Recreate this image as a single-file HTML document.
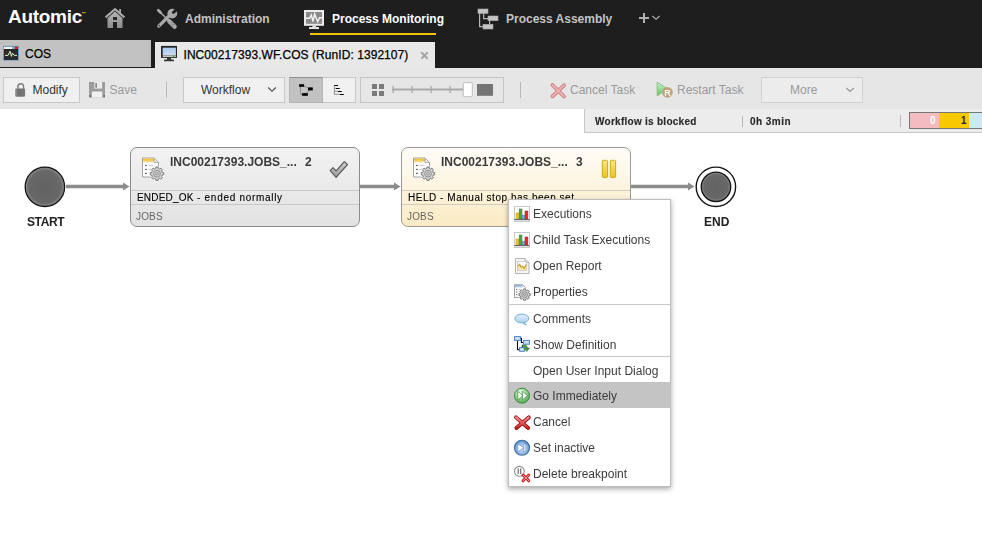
<!DOCTYPE html>
<html><head><meta charset="utf-8">
<style>
*{margin:0;padding:0;box-sizing:border-box}
html,body{width:982px;height:560px;overflow:hidden;background:#fff;font-family:"Liberation Sans",sans-serif}
.a{position:absolute}
.t{position:absolute;line-height:0;white-space:nowrap}
.g{will-change:transform}
svg{position:absolute;overflow:visible}
</style></head><body>
<!-- top nav -->
<div class="a" style="left:0;top:0;width:982px;height:68px;background:#1e1e1e"></div>
<div class="t" style="left:8px;top:6px;font:bold 19px 'Liberation Sans';color:#fff;letter-spacing:-0.3px">Automic</div>
<div class="a" style="left:82px;top:12px;width:3px;height:1px;background:#c9a800"></div>

<div class="t" style="left:185px;top:12px;font:bold 12px 'Liberation Sans';color:#c3c3c3">Administration</div>
<div class="t" style="left:332px;top:12px;font:bold 12px 'Liberation Sans';color:#fff">Process Monitoring</div>
<div class="a" style="left:310px;top:33px;width:126px;height:2px;background:#f2c200"></div>
<div class="t" style="left:506px;top:12px;font:bold 12px 'Liberation Sans';color:#c3c3c3">Process Assembly</div>

<!-- tabs -->
<div class="a" style="left:0;top:40px;width:151px;height:27px;background:#c2c2c2"></div>
<div class="t" style="left:25px;top:47px;font:12px 'Liberation Sans';color:#000;-webkit-text-stroke:0.25px #000">COS</div>
<div class="a" style="left:155px;top:42px;width:280px;height:30px;background:#e8e8e8"></div>
<div class="t" style="left:183.5px;top:48px;font:12px 'Liberation Sans';color:#000;letter-spacing:0.06px;-webkit-text-stroke:0.25px #000">INC00217393.WF.COS (RunID: 1392107)</div>

<!-- toolbar -->
<div class="a" style="left:0;top:68px;width:982px;height:41px;background:#e6e6e6"></div>
<div class="a" style="left:3px;top:77px;width:77px;height:26px;background:#f0f0f0;border:1px solid #c8c8c8"></div>
<div class="t" style="left:32.5px;top:83px;font:12px 'Liberation Sans';color:#333">Modify</div>
<div class="t" style="left:109.5px;top:83px;font:12px 'Liberation Sans';color:#9a9a9a">Save</div>
<div class="a" style="left:166px;top:82px;width:1px;height:16px;background:#b8b8b8"></div>
<div class="a" style="left:183px;top:77px;width:102px;height:26px;background:#f0f0f0;border:1px solid #c8c8c8"></div>
<div class="t" style="left:201px;top:83px;font:12px 'Liberation Sans';color:#333">Workflow</div>
<div class="a" style="left:289px;top:77px;width:67px;height:26px;background:#f0f0f0;border:1px solid #c8c8c8"></div>
<div class="a" style="left:289px;top:77px;width:34px;height:26px;background:#c2c2c2;border:1px solid #b4b4b4;border-top-color:#8e8e8e"></div>
<div class="a" style="left:360px;top:77px;width:144px;height:26px;background:#e6e6e6;border:1px solid #c4c4c4"></div>
<div class="a" style="left:520px;top:82px;width:1px;height:16px;background:#b8b8b8"></div>
<div class="t" style="left:570px;top:83px;font:12px 'Liberation Sans';color:#9a9a9a">Cancel Task</div>
<div class="t" style="left:677px;top:83px;font:12px 'Liberation Sans';color:#9a9a9a">Restart Task</div>
<div class="a" style="left:761px;top:77px;width:102px;height:26px;background:#ececec;border:1px solid #d0d0d0"></div>
<div class="t" style="left:790px;top:83px;font:12px 'Liberation Sans';color:#9a9a9a">More</div>

<!-- info bar -->
<div class="a" style="left:584px;top:109px;width:398px;height:24px;background:#ececec;border-left:1px solid #c8c8c8;border-bottom:1px solid #c8c8c8"></div>
<div class="t g" style="left:594.5px;top:116px;font:bold 10px 'Liberation Sans';color:#2a2a2a;letter-spacing:0.27px;-webkit-text-stroke:0.15px #2a2a2a">Workflow is blocked</div>
<div class="a" style="left:742px;top:116px;width:1px;height:11px;background:#b8b8b8"></div>
<div class="t g" style="left:750px;top:116px;font:bold 10px 'Liberation Sans';color:#2a2a2a;letter-spacing:0.45px;-webkit-text-stroke:0.15px #2a2a2a">0h 3min</div>
<div class="a" style="left:900px;top:115px;width:1px;height:12px;background:#b8b8b8"></div>
<div class="a" style="left:909px;top:112px;width:73px;height:17px;border:1px solid #777;border-right:0;background:#cde9f5"></div>
<div class="a" style="left:910px;top:113px;width:29px;height:15px;background:#f2bcc0"></div>
<div class="a" style="left:939px;top:113px;width:30px;height:15px;background:#f8c800"></div>
<div class="t g" style="left:930px;top:115px;font:bold 10px 'Liberation Sans';color:#fff">0</div>
<div class="t g" style="left:960.5px;top:115px;font:bold 10px 'Liberation Sans';color:#222">1</div>

<!-- workflow -->
<svg style="left:0;top:0" width="982" height="560"><g stroke="#8c8c8c" stroke-width="3.5"><line x1="66" y1="186.4" x2="124" y2="186.4"/><line x1="360" y1="186.4" x2="395" y2="186.4"/><line x1="631" y1="186.4" x2="689" y2="186.4"/></g></svg>

<svg style="left:0;top:150px" width="760" height="70" viewBox="0 150 760 70">
<defs><radialGradient id="gBall2" cx="0.5" cy="0.5" r="0.5"><stop offset="0" stop-color="#626262"/><stop offset="0.82" stop-color="#686868"/><stop offset="0.95" stop-color="#858585"/><stop offset="1" stop-color="#8a8a8a"/></radialGradient></defs>
<circle cx="44.9" cy="186.8" r="19.7" fill="url(#gBall2)" stroke="#141414" stroke-width="1.3"/>
<circle cx="715.9" cy="186.8" r="19.7" fill="#fff" stroke="#141414" stroke-width="1.4"/>
<circle cx="716" cy="186.8" r="14.7" fill="url(#gBall2)" stroke="#141414" stroke-width="1.4"/>
</svg>
<div class="t g" style="left:26.5px;top:215px;font:bold 12px 'Liberation Sans';color:#222;letter-spacing:-0.4px">START</div>


<div class="t g" style="left:704px;top:215px;font:bold 12px 'Liberation Sans';color:#222">END</div>

<!-- node 1 -->
<div class="a" style="left:130px;top:147px;width:230px;height:80px;border:1px solid #8c8c8c;border-radius:7px;background:linear-gradient(#f2f2f2,#e2e2e2)"></div>
<div class="a" style="left:131px;top:190px;width:228px;height:1px;background:#c8c8c8"></div>
<div class="a" style="left:131px;top:204px;width:228px;height:1px;background:#c8c8c8"></div>
<div class="t g" style="left:170px;top:155px;font:bold 12px 'Liberation Sans';color:#3a3a3a">INC00217393.JOBS_...</div>
<div class="t g" style="left:305px;top:155px;font:bold 12px 'Liberation Sans';color:#3a3a3a">2</div>
<div class="t g" style="left:136.5px;top:192.1px;font:10px 'Liberation Sans';color:#000;-webkit-text-stroke:0.12px #000"><span style="letter-spacing:0.2px">ENDED_OK</span><span style="letter-spacing:0.7px"> - ended normally</span></div>
<div class="t g" style="left:136px;top:210.7px;font:10px 'Liberation Sans';color:#666;letter-spacing:0.15px">JOBS</div>

<!-- node 2 -->
<div class="a" style="left:401px;top:147px;width:230px;height:80px;border:1px solid #999;border-radius:7px;background:linear-gradient(#fefcf7 0%,#fdf6e4 40%,#fbebc4 100%)"></div>
<div class="a" style="left:402px;top:190px;width:228px;height:1px;background:#d4ccb8"></div>
<div class="a" style="left:402px;top:204px;width:228px;height:1px;background:#d4ccb8"></div>
<div class="t g" style="left:441px;top:155px;font:bold 12px 'Liberation Sans';color:#3a3a3a">INC00217393.JOBS_...</div>
<div class="t g" style="left:576px;top:155px;font:bold 12px 'Liberation Sans';color:#3a3a3a">3</div>
<div class="t g" style="left:407.5px;top:192.1px;font:10px 'Liberation Sans';color:#000;letter-spacing:0.53px;-webkit-text-stroke:0.12px #000">HELD - Manual stop has been set</div>
<div class="t g" style="left:407px;top:210.7px;font:10px 'Liberation Sans';color:#666;letter-spacing:0.15px">JOBS</div>


<svg style="left:0;top:0" width="982" height="560" viewBox="0 0 982 560">
<defs>
<linearGradient id="gHome" x1="0" y1="0" x2="0" y2="1"><stop offset="0" stop-color="#b4b4b4"/><stop offset="1" stop-color="#8c8c8c"/></linearGradient>
<radialGradient id="gBall" cx="0.5" cy="0.5" r="0.5"><stop offset="0" stop-color="#5e5e5e"/><stop offset="0.8" stop-color="#686868"/><stop offset="1" stop-color="#8a8a8a"/></radialGradient>
<linearGradient id="gChk" x1="0" y1="0" x2="0" y2="1"><stop offset="0" stop-color="#cfcfcf"/><stop offset="1" stop-color="#9a9a9a"/></linearGradient>
<linearGradient id="gPause" x1="0" y1="0" x2="0" y2="1"><stop offset="0" stop-color="#fbe774"/><stop offset="1" stop-color="#e9c21c"/></linearGradient>
<linearGradient id="gLock" x1="0" y1="0" x2="1" y2="0"><stop offset="0" stop-color="#9a9a9a"/><stop offset="0.3" stop-color="#6e6e6e"/><stop offset="1" stop-color="#7a7a7a"/></linearGradient>
<linearGradient id="gGreen" x1="0" y1="0" x2="0" y2="1"><stop offset="0" stop-color="#c8f2c8"/><stop offset="0.5" stop-color="#98dc98"/><stop offset="1" stop-color="#68c068"/></linearGradient>
<linearGradient id="gScreen" x1="0" y1="0" x2="0" y2="1"><stop offset="0" stop-color="#a8c8ec"/><stop offset="1" stop-color="#c8dcf0"/></linearGradient>
<g id="docgear">
 <path d="M0.5,0.5 H12 L16.5,5 V19.5 H0.5 Z" fill="#fcfcfc" stroke="#a4a4a4" stroke-width="1"/>
 <rect x="1" y="1" width="11" height="3.6" fill="#f2c444"/>
 <rect x="1" y="3.2" width="11" height="1.4" fill="#f6dc8c"/>
 <path d="M12,0.5 V5 H16.5 Z" fill="#e4ecf4" stroke="#a4a4a4" stroke-width="0.8"/>
 <rect x="3" y="7.4" width="1.8" height="1" fill="#444"/><rect x="6.5" y="7.4" width="5" height="0.9" fill="#c4c4c4"/>
 <rect x="3" y="11.4" width="1.8" height="1" fill="#444"/><rect x="6.5" y="11.4" width="3" height="0.9" fill="#c4c4c4"/>
 <rect x="3" y="15.4" width="1.8" height="1" fill="#444"/>
 <g transform="translate(15,16.2)">
  <circle r="7.6" fill="#fff" opacity="0.6"/>
  <path d="M5.25,-1.28 L6.69,-1.20 L6.69,1.20 L5.25,1.28 L4.62,2.80 L5.58,3.89 L3.89,5.58 L2.80,4.62 L1.28,5.25 L1.20,6.69 L-1.20,6.69 L-1.28,5.25 L-2.80,4.62 L-3.89,5.58 L-5.58,3.89 L-4.62,2.80 L-5.25,1.28 L-6.69,1.20 L-6.69,-1.20 L-5.25,-1.28 L-4.62,-2.80 L-5.58,-3.89 L-3.89,-5.58 L-2.80,-4.62 L-1.28,-5.25 L-1.20,-6.69 L1.20,-6.69 L1.28,-5.25 L2.80,-4.62 L3.89,-5.58 L5.58,-3.89 L4.62,-2.80 Z" fill="#d4d4d4" stroke="#707070" stroke-width="0.9" stroke-linejoin="round"/>
  <circle r="3.4" fill="#cfcfcf" stroke="#8a8a8a" stroke-width="0.9"/>
  <circle r="1.6" fill="#b8b8b8" stroke="#999" stroke-width="0.6"/>
 </g>
</g>
</defs>
<!-- logo TM -->
<rect x="82" y="12" width="3.5" height="1.2" fill="#b89a20"/>
<!-- home -->
<path d="M107.5,28 V18.3 L115,11.6 L122.5,18.3 V28 H117 V22 H113 V28 Z" fill="url(#gHome)"/>
<rect x="113.1" y="17.1" width="3.9" height="2.8" fill="#1e1e1e"/>
<path d="M105.6,17.4 L115,9.2 L124.4,17.4" fill="none" stroke="#a8a8a8" stroke-width="2.1" stroke-linejoin="miter"/>
<rect x="119.2" y="9" width="1.8" height="4" fill="#a8a8a8"/>
<!-- tools -->
<g stroke="#a9a9a9" stroke-linecap="round" fill="none">
 <line x1="159.5" y1="11.5" x2="167.5" y2="19.5" stroke-width="1.5"/>
 <line x1="158.3" y1="10.3" x2="160.6" y2="12.6" stroke-width="2.8"/>
 <line x1="169.2" y1="21.2" x2="174.6" y2="26.6" stroke-width="4.4"/>
 <line x1="158.8" y1="26.2" x2="169.5" y2="15.5" stroke-width="3.2"/>
</g>
<circle cx="172.3" cy="13.6" r="4.9" fill="#a9a9a9"/>
<line x1="173.4" y1="12.5" x2="178.5" y2="7.4" stroke="#1e1e1e" stroke-width="2.8" stroke-linecap="round"/>
<circle cx="159.2" cy="25.8" r="0.7" fill="#1e1e1e"/>
<g fill="#6e6e6e"><rect x="170.8" y="22.6" width="0.9" height="0.9"/><rect x="172.4" y="24.2" width="0.9" height="0.9"/><rect x="172.4" y="22.2" width="0.9" height="0.9"/><rect x="170.6" y="24.4" width="0.9" height="0.9"/><rect x="174" y="23.8" width="0.9" height="0.9"/><rect x="172.2" y="26" width="0.9" height="0.9"/></g>
<!-- monitor (process monitoring) -->
<rect x="305" y="11" width="18" height="13.8" fill="#8a8a8a" stroke="#ececec" stroke-width="2"/>
<polyline points="306,18.2 309.6,18.2 311.3,15 313,21.6 314.6,14 317.7,21.8 319.5,17.8 322,17.8" fill="none" stroke="#f4f4f4" stroke-width="1.4" stroke-linejoin="miter"/>
<rect x="312.3" y="25.7" width="3.8" height="1.8" fill="#e0e0e0"/>
<rect x="309" y="27.1" width="10" height="1.9" fill="#ececec"/>
<!-- process assembly -->
<g stroke="#b8b8b8" fill="none" stroke-width="1.2">
 <polyline points="479.6,13.5 479.6,26.6 483,26.6"/>
 <polyline points="483.6,13.5 483.6,18.6 488,18.6"/>
 <line x1="489.6" y1="20.7" x2="489.6" y2="24.3"/>
</g>
<rect x="478" y="9" width="10" height="4.5" fill="#c4c4c4" stroke="#a8a8a8" stroke-width="0.6"/>
<rect x="488" y="16" width="10" height="4.7" fill="#c4c4c4" stroke="#a8a8a8" stroke-width="0.6"/>
<rect x="483" y="24.3" width="10" height="4.7" fill="#c4c4c4" stroke="#a8a8a8" stroke-width="0.6"/>
<!-- plus chevron -->
<rect x="639" y="17" width="10" height="2" fill="#b0b0b0"/>
<rect x="643" y="13" width="2" height="10" fill="#b0b0b0"/>
<polyline points="652.4,16 656,19.2 659.6,16" fill="none" stroke="#a8a8a8" stroke-width="1.3"/>
<!-- COS tab icon -->
<rect x="3.5" y="46.3" width="15" height="13.8" fill="#111" stroke="#6f9fd0" stroke-width="0.9"/>
<rect x="4" y="46.8" width="8" height="2.2" fill="#eef4fb"/>
<rect x="12" y="46.8" width="2.8" height="2.2" fill="#8ab0d8"/>
<rect x="15" y="46.8" width="3" height="2.2" fill="#e02020"/>
<rect x="4" y="49.2" width="14" height="10.5" fill="#2a2a2a"/>
<polyline points="5,55.4 8,55.4 10,51.2 11.4,56.4 12.4,53 14.2,55.4 17,55.4" fill="none" stroke="#d8f4c0" stroke-width="1"/>
<!-- active tab monitor -->
<rect x="161" y="45.9" width="16" height="12" fill="#262626"/>
<rect x="162.7" y="47.7" width="13.2" height="7.5" fill="url(#gScreen)"/>
<rect x="162.7" y="55.4" width="13.2" height="1.5" fill="#d8d8d8"/>
<rect x="172.8" y="55.4" width="1.6" height="1.5" fill="#30b030"/>
<rect x="167" y="57.9" width="4" height="2" fill="#333"/>
<rect x="164" y="59.5" width="10" height="1.8" rx="0.9" fill="#333"/>
<!-- close x -->
<path d="M421.3,52.3 L427.7,58.7 M427.7,52.3 L421.3,58.7" stroke="#a6a6a6" stroke-width="2"/>
<!-- lock -->
<path d="M17.9,89 V86.6 A2.85,2.85 0 0 1 23.6,86.6 V89" fill="none" stroke="#7c7c7c" stroke-width="1.4"/>
<rect x="15.1" y="88.4" width="10" height="8.3" rx="1.2" fill="url(#gLock)"/>
<!-- save -->
<path d="M89,82 H105 V97.6 H89 Z" fill="#9c9c9c"/>
<rect x="94.3" y="82" width="7.8" height="6.6" fill="#ececec"/>
<rect x="95.3" y="83" width="1.7" height="4.8" fill="#8a8a8a"/>
<rect x="91.9" y="91.5" width="10.4" height="6.1" fill="#f0f0f0"/>
<rect x="89" y="95" width="1.8" height="2" fill="#707070"/><rect x="103.2" y="95" width="1.8" height="2" fill="#707070"/>
<!-- workflow chevron -->
<polyline points="268.2,87.5 272,91.2 275.8,87.5" fill="none" stroke="#555" stroke-width="1.2"/>
<!-- tree toggle icon -->
<g stroke="#8a8a8a" stroke-width="0.9" fill="none"><polyline points="300.5,86 300.5,94.5 303,94.5"/><line x1="304" y1="86" x2="309" y2="88.5"/><line x1="310" y1="90" x2="306" y2="93.5"/></g>
<rect x="299.1" y="84.2" width="5" height="2.6" fill="#000"/>
<rect x="308" y="87.4" width="4.8" height="3" fill="#000"/>
<rect x="302.1" y="93.1" width="5.7" height="2.7" fill="#000"/>
<!-- list toggle icon -->
<g stroke="#888" stroke-width="0.9" fill="none"><polyline points="334.4,86.5 334.4,94.5"/><line x1="334.4" y1="88.4" x2="336" y2="88.4"/><line x1="334.4" y1="91.4" x2="338" y2="91.4"/><line x1="334.4" y1="94.3" x2="340" y2="94.3"/></g>
<rect x="334" y="85" width="4" height="1" fill="#000"/>
<rect x="336" y="88" width="3.7" height="1" fill="#000"/>
<rect x="338" y="91" width="3.7" height="1" fill="#000"/>
<rect x="340" y="94" width="3.8" height="1" fill="#000"/>
<!-- slider -->
<g fill="#7a7a7a"><rect x="372" y="84" width="5" height="5"/><rect x="379" y="84" width="5" height="5"/><rect x="372" y="91" width="5" height="5"/><rect x="379" y="91" width="5" height="5"/></g>
<rect x="392" y="88.5" width="71" height="2" fill="#aaa"/>
<g fill="#aaa"><rect x="392.5" y="86" width="1.3" height="7"/><rect x="411.5" y="86" width="1.3" height="7"/><rect x="430.5" y="86" width="1.3" height="7"/><rect x="449.5" y="86" width="1.3" height="7"/></g>
<rect x="463.3" y="82.7" width="9" height="14" rx="1" fill="#fff" stroke="#b0b0b0" stroke-width="0.8"/>
<rect x="477" y="84" width="16" height="11.8" fill="#757575"/>
<!-- cancel task x -->
<path d="M552.5,85 L564,96.5 M564,85.3 L552.5,96.3" stroke="#c47a7a" stroke-width="3.8" stroke-linecap="round"/>
<path d="M552.5,85 L564,96.5 M564,85.3 L552.5,96.3" stroke="#eeb0b0" stroke-width="2.2" stroke-linecap="round"/>
<!-- restart -->
<path d="M657.2,82.3 L667.5,88.8 L657.2,95.8 Z" fill="url(#gGreen)" stroke="#6cb06c" stroke-width="0.7"/>
<circle cx="667.4" cy="92.3" r="5.4" fill="#c4a27e"/>
<text x="667.5" y="95.6" font-family="Liberation Sans" font-weight="bold" font-size="9" fill="#fff" text-anchor="middle">R</text>
<!-- more chevron -->
<polyline points="846.2,88 850,91.5 853.8,88" fill="none" stroke="#9a9a9a" stroke-width="1.2"/>
<!-- arrowheads -->
<path d="M123,182.5 L129.5,186.5 L123,190.5 Z" fill="#8c8c8c"/>
<path d="M394,182.5 L400.5,186.5 L394,190.5 Z" fill="#8c8c8c"/>
<path d="M688,182.5 L694.5,186.5 L688,190.5 Z" fill="#8c8c8c"/>
<!-- node icons -->
<use href="#docgear" x="142" y="157.5"/>
<use href="#docgear" x="413" y="157.5"/>
<!-- check -->
<path d="M330.2,170.6 L333,167.6 L336.1,170.9 L344.3,161.6 L347.5,164.5 L336.1,177.3 Z" fill="url(#gChk)" stroke="#5a5a5a" stroke-width="1.15" stroke-linejoin="round"/>
<!-- pause -->
<rect x="602.3" y="160.3" width="5.3" height="17.3" rx="1.2" fill="url(#gPause)" stroke="#c9a20a" stroke-width="0.9"/>
<rect x="610.3" y="160.3" width="5.3" height="17.3" rx="1.2" fill="url(#gPause)" stroke="#c9a20a" stroke-width="0.9"/>
</svg>
<!-- context menu -->
<div class="a" style="left:508px;top:199px;width:163px;height:288px;background:#fff;border:1px solid #bdbdbd;box-shadow:0 2px 5px rgba(0,0,0,0.35)"></div>
<div class="a" style="left:509px;top:304px;width:161px;height:1px;background:#c8c8c8"></div>
<div class="a" style="left:509px;top:356px;width:161px;height:1px;background:#c8c8c8"></div>
<div class="a" style="left:509px;top:382px;width:161px;height:26px;background:#c4c4c4"></div>
<div class="t g" style="left:532.5px;top:207px;font:12px 'Liberation Sans';color:#3c3c3c">Executions</div>
<div class="t g" style="left:532.5px;top:233px;font:12px 'Liberation Sans';color:#3c3c3c">Child Task Executions</div>
<div class="t g" style="left:532.5px;top:259px;font:12px 'Liberation Sans';color:#3c3c3c">Open Report</div>
<div class="t g" style="left:532.5px;top:285px;font:12px 'Liberation Sans';color:#3c3c3c">Properties</div>
<div class="t g" style="left:532.5px;top:312px;font:12px 'Liberation Sans';color:#3c3c3c">Comments</div>
<div class="t g" style="left:532.5px;top:338px;font:12px 'Liberation Sans';color:#3c3c3c">Show Definition</div>
<div class="t g" style="left:532.5px;top:364px;font:12px 'Liberation Sans';color:#3c3c3c">Open User Input Dialog</div>
<div class="t g" style="left:532.5px;top:389px;font:12px 'Liberation Sans';color:#3c3c3c">Go Immediately</div>
<div class="t g" style="left:532.5px;top:415px;font:12px 'Liberation Sans';color:#3c3c3c">Cancel</div>
<div class="t g" style="left:532.5px;top:441px;font:12px 'Liberation Sans';color:#3c3c3c">Set inactive</div>
<div class="t g" style="left:532.5px;top:467px;font:12px 'Liberation Sans';color:#3c3c3c">Delete breakpoint</div>

<svg style="left:0;top:0" width="982" height="560" viewBox="0 0 982 560">
<defs>
<radialGradient id="gGo2" cx="0.4" cy="0.3" r="0.75"><stop offset="0" stop-color="#effbef"/><stop offset="0.45" stop-color="#9ad69a"/><stop offset="1" stop-color="#4ea64e"/></radialGradient>
<linearGradient id="gGo" x1="0" y1="0" x2="0" y2="1"><stop offset="0" stop-color="#8fd08f"/><stop offset="1" stop-color="#3c9a3c"/></linearGradient>
<radialGradient id="gBlue2" cx="0.5" cy="0.55" r="0.55"><stop offset="0" stop-color="#c4daf2"/><stop offset="0.6" stop-color="#9cbfe6"/><stop offset="1" stop-color="#5288c4"/></radialGradient>
<linearGradient id="gBlue" x1="0" y1="0" x2="0" y2="1"><stop offset="0" stop-color="#7aaee0"/><stop offset="1" stop-color="#4a82c0"/></linearGradient>
<linearGradient id="gPropHdr" x1="0" y1="0" x2="0" y2="1"><stop offset="0" stop-color="#7aa8dc"/><stop offset="1" stop-color="#c4dcf4"/></linearGradient>
<linearGradient id="gBub" x1="0" y1="0" x2="0" y2="1"><stop offset="0" stop-color="#e4f2fb"/><stop offset="1" stop-color="#a8d0ec"/></linearGradient>
<g id="bars">
 <rect x="0.5" y="0.5" width="15" height="15" fill="#fff" stroke="#c8c8c8" stroke-width="1"/>
 <rect x="2" y="7" width="3" height="6" fill="#f0c030" stroke="#c89a10" stroke-width="0.5"/>
 <rect x="5.2" y="3" width="2.8" height="10" fill="#50a050" stroke="#307830" stroke-width="0.5"/>
 <rect x="8.3" y="9.2" width="2.6" height="3.8" fill="#78acdc" stroke="#4a80b8" stroke-width="0.5"/>
 <rect x="11" y="5" width="2.9" height="8" fill="#e03030" stroke="#a81818" stroke-width="0.5"/>
 <rect x="0.5" y="13" width="15" height="1.2" fill="#666"/>
</g>
</defs>
<use href="#bars" x="514" y="206"/>
<use href="#bars" x="514" y="232"/>
<!-- open report -->
<path d="M515.5,258.5 H525 L529,262.5 V273.5 H515.5 Z" fill="#f6f6f6" stroke="#b4b4b4" stroke-width="1"/>
<path d="M525,258.5 V262.5 H529" fill="#e0e0e0" stroke="#a8a8a8" stroke-width="0.8"/>
<rect x="517.6" y="261.4" width="9" height="9.2" fill="#fdfdfd" stroke="#c4c4c4" stroke-width="0.8"/>
<path d="M518,270.3 V266.5 L519.6,264.2 L521.1,267 L522.4,266.2 L524.1,268.4 L526.3,264.2 V270.3 Z" fill="#f8e4a8"/>
<polyline points="518,266.5 519.6,264.2 521.1,267 522.4,266.2 524.1,268.4 526.3,264.2" fill="none" stroke="#c49a1c" stroke-width="1.1"/>
<!-- properties -->
<path d="M514.5,284.7 H522.5 L525.5,287.7 V297.5 H514.5 Z" fill="#f8f8f8" stroke="#a0a0a0" stroke-width="1"/>
<rect x="515" y="285.2" width="7.5" height="2.2" fill="url(#gPropHdr)"/>
<g fill="#777"><rect x="516" y="289" width="1.2" height="1"/><rect x="516" y="291.5" width="1.2" height="1"/><rect x="516" y="294" width="1.2" height="1"/></g>
<g fill="#ccc"><rect x="518.5" y="289" width="3" height="1"/><rect x="518.5" y="291.5" width="2" height="1"/></g>
<g transform="translate(524.6,294.6) scale(0.85)">
 <circle r="7.8" fill="#fff" opacity="0.7"/>
 <path d="M5.25,-1.28 L6.69,-1.20 L6.69,1.20 L5.25,1.28 L4.62,2.80 L5.58,3.89 L3.89,5.58 L2.80,4.62 L1.28,5.25 L1.20,6.69 L-1.20,6.69 L-1.28,5.25 L-2.80,4.62 L-3.89,5.58 L-5.58,3.89 L-4.62,2.80 L-5.25,1.28 L-6.69,1.20 L-6.69,-1.20 L-5.25,-1.28 L-4.62,-2.80 L-5.58,-3.89 L-3.89,-5.58 L-2.80,-4.62 L-1.28,-5.25 L-1.20,-6.69 L1.20,-6.69 L1.28,-5.25 L2.80,-4.62 L3.89,-5.58 L5.58,-3.89 L4.62,-2.80 Z" fill="#d4d4d4" stroke="#6a6a6a" stroke-width="1" stroke-linejoin="round"/>
 <circle r="3.4" fill="#cfcfcf" stroke="#808080" stroke-width="1"/>
 <circle r="1.6" fill="#b0b0b0" stroke="#909090" stroke-width="0.6"/>
</g>
<!-- comments -->
<path d="M524,322.5 L526.5,325 L523.2,323.6 Z" fill="#9ecbea" stroke="#6aa8d4" stroke-width="0.8"/>
<ellipse cx="521.8" cy="318.5" rx="7" ry="4.4" fill="url(#gBub)" stroke="#74acd6" stroke-width="1"/>
<!-- show definition -->
<g stroke="#111" stroke-width="1.1" fill="none"><polyline points="517.5,340.8 517.5,349.6 519.5,349.6"/><polyline points="520.7,338.4 521.4,338.4 521.4,342.5 523.3,342.5"/><line x1="522.4" y1="344.8" x2="522.4" y2="347.2"/></g>
<rect x="514.6" y="336.6" width="5.8" height="3.8" fill="#cfe2f6" stroke="#4a82c4" stroke-width="1"/>
<rect x="523.6" y="340.4" width="5.8" height="3.8" fill="#cfe2f6" stroke="#4a82c4" stroke-width="1"/>
<rect x="519.6" y="347.5" width="4.8" height="3.8" fill="#cfe2f6" stroke="#4a82c4" stroke-width="1"/>
<path d="M522.6,345.4 Q526.5,343.6 527.6,348 L529.6,348 L526.8,351.6 L523.9,348 L525.8,348 Q525.2,346 522.6,346.8 Z" fill="#3f9a3f" stroke="#236d23" stroke-width="0.5"/>
<!-- go immediately -->
<circle cx="522" cy="395.7" r="7.5" fill="url(#gGo2)" stroke="#3a8a3a" stroke-width="1"/>
<path d="M517.9,391.3 L523.1,395.6 L517.9,399.9 Z M522.3,391.3 L527.5,395.6 L522.3,399.9 Z" fill="#fff" stroke="#3c8c3c" stroke-width="0.7" stroke-linejoin="round"/>
<!-- cancel x red -->
<linearGradient id="gRedX" gradientUnits="userSpaceOnUse" x1="0" y1="416" x2="0" y2="429"><stop offset="0" stop-color="#f6a0a0"/><stop offset="0.5" stop-color="#e45a5a"/><stop offset="1" stop-color="#c82020"/></linearGradient>
<path d="M516,417.4 L528.2,428 M528.8,417.4 L516.4,428" stroke="#9a1010" stroke-width="3.9" stroke-linecap="round"/>
<path d="M528.6,417.5 L516.5,427.9" stroke="#9a1010" stroke-width="3.2" stroke-linecap="round"/>
<path d="M516,417.4 L528.2,428 M528.6,417.5 L516.5,427.9" stroke="url(#gRedX)" stroke-width="2.2" stroke-linecap="round"/>
<!-- set inactive -->
<circle cx="522" cy="447.8" r="7.5" fill="url(#gBlue2)" stroke="#3a6eaa" stroke-width="1.1"/>
<path d="M517.9,443.9 L523.8,447.8 L517.9,451.7 Z" fill="#fff" stroke="#4a7cb8" stroke-width="0.5"/>
<rect x="524" y="444" width="1.9" height="7.7" fill="#fff" stroke="#4a7cb8" stroke-width="0.5"/>
<!-- delete breakpoint -->
<circle cx="519.4" cy="471.3" r="4.9" fill="#fff" stroke="#8c8c8c" stroke-width="1.1"/>
<rect x="517.6" y="468.4" width="1.3" height="5.6" fill="#7a7a7a"/><rect x="520" y="468.4" width="1.3" height="5.6" fill="#7a7a7a"/>
<path d="M523,475 L528.8,480.8 M528.8,475 L523,480.8" stroke="#d02020" stroke-width="3" stroke-linecap="round"/>
<path d="M523,475 L528.8,480.8 M528.8,475 L523,480.8" stroke="#f6b0b0" stroke-width="1" stroke-linecap="round"/>
</svg>
</body></html>
